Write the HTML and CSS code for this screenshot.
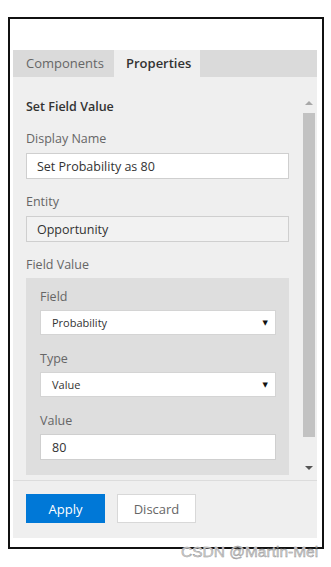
FILE: index.html
```html
<!DOCTYPE html>
<html lang="en">
<head>
  <meta charset="UTF-8" />
  <meta name="viewport" content="width=device-width, initial-scale=1.0"/>
  <title>Set Field Value</title>
  <link rel="stylesheet" href="styles.css">
</head>
<body>
  <div class="frame">
    <div class="panel">
      <div class="tabs">
        <div class="tab">Components</div>
        <div class="tab active">Properties</div>
      </div>

      <div class="scroll-area">
        <div class="content">
          <div class="heading">Set Field Value</div>

          <label class="field-label" for="displayName">Display Name</label>
          <input class="text-input" type="text" id="displayName" value="Set Probability as 80"/>

          <label class="field-label" for="entity">Entity</label>
          <input class="text-input readonly" type="text" id="entity" value="Opportunity" readonly/>

          <div class="field-label">Field Value</div>
          <div class="group">
            <div class="group-label">Field</div>
            <div class="select"><span>Probability</span><span class="caret">&#9660;</span></div>

            <div class="group-label">Type</div>
            <div class="select"><span>Value</span><span class="caret">&#9660;</span></div>

            <label class="group-label" for="value">Value</label>
            <input class="text-input small" type="text" id="value" value="80"/>
          </div>
        </div>

        <div class="scrollbar">
          <div class="arrow-up"></div>
          <div class="thumb"></div>
          <div class="arrow-down"></div>
        </div>
      </div>

      <div class="footer">
        <button class="btn" id="applyBtn">Apply</button>
        <button class="btn" id="discardBtn">Discard</button>
      </div>
    </div>
  </div>

  <div class="watermark">CSDN @Martin-Mei</div>
</body>
</html>
```

FILE: styles.css
```css
body {
  margin: 0;
  font-family: "Open Sans", "Noto Sans", sans-serif;
  background-color: #fff;
  position: relative;
  height: 567px;
}
.frame {
  margin: 17px 0 0 8px;
  border: 2px solid #111;
  padding: 31px 5px 0 3px;
  box-sizing: border-box;
  width: 316px;
  height: 532px;
}
.panel {
  background-color: #efefef;
  height: 488px;
}
.tabs {
  display: flex;
  height: 27px;
  background-color: #dadada;
}
.tab {
  font-size: 13px;
  line-height: 27px;
  color: #666;
  padding-left: 13px;
  width: 101px;
  box-sizing: border-box;
  white-space: nowrap;
}
.tab.active {
  background-color: #efefef;
  color: #333;
  font-weight: 600;
  width: 86px;
  padding-left: 12px;
}
.scroll-area {
  display: flex;
  height: 403px;
  overflow: hidden;
  border-bottom: 1px solid #dcdcdc;
}
.content {
  width: 263px;
  padding-left: 13px;
  padding-top: 21px;
}
.heading {
  font-size: 12.5px;
  font-weight: 600;
  color: #333;
  line-height: 18px;
  margin-bottom: 14px;
}
.field-label {
  display: block;
  font-size: 12.5px;
  color: #666;
  line-height: 18px;
  margin-bottom: 5px;
}
.text-input {
  display: block;
  width: 100%;
  height: 26px;
  box-sizing: border-box;
  border: 1px solid #cfcfcf;
  background-color: #fff;
  font-family: inherit;
  font-size: 12.5px;
  color: #333;
  padding: 0 10px;
  margin: 0 0 14px 0;
  outline: none;
}
.text-input.readonly {
  background-color: #f2f2f2;
}
.group {
  background-color: #dedede;
  padding: 10px 13px 15px 14px;
  margin-top: -1px;
}
.group-label {
  display: block;
  font-size: 12.5px;
  color: #666;
  line-height: 18px;
  margin-bottom: 4px;
}
.select {
  display: flex;
  justify-content: space-between;
  align-items: center;
  height: 25px;
  box-sizing: border-box;
  background-color: #fff;
  border: 1px solid #d4d4d4;
  padding: 0 7px 0 11px;
  font-size: 11px;
  color: #333;
  margin-bottom: 15px;
}
.caret {
  font-family: "DejaVu Sans", sans-serif;
  font-size: 7px;
  color: #111;
}
.text-input.small {
  margin-bottom: 0;
  padding-left: 11px;
}
.scrollbar {
  width: 12px;
  margin-left: 14px;
  padding-top: 24px;
  display: flex;
  flex-direction: column;
  align-items: center;
}
.arrow-up {
  width: 0;
  height: 0;
  border-left: 4px solid transparent;
  border-right: 4px solid transparent;
  border-bottom: 4px solid #a8a8a8;
}
.thumb {
  width: 12px;
  height: 324px;
  margin-top: 8px;
  background-color: #c2c2c2;
}
.arrow-down {
  width: 0;
  height: 0;
  margin-top: 29px;
  border-left: 4px solid transparent;
  border-right: 4px solid transparent;
  border-top: 4px solid #555;
}
.footer {
  display: flex;
  gap: 12px;
  padding: 13px 0 0 13px;
}
.btn {
  height: 29px;
  width: 79px;
  font-family: inherit;
  font-size: 13px;
  cursor: pointer;
}
#applyBtn {
  background-color: #0078d7;
  color: #fff;
  border: none;
}
#discardBtn {
  background-color: #fff;
  color: #666;
  border: 1px solid #d8d8d8;
}
.watermark {
  position: absolute;
  left: 181px;
  top: 543px;
  font-family: "Liberation Sans", Arial, sans-serif;
  font-size: 15.5px;
  color: #d0d0d0;
  -webkit-text-stroke: 0.4px #909090;
  text-shadow: 0 0 1px #fff;
}
```
